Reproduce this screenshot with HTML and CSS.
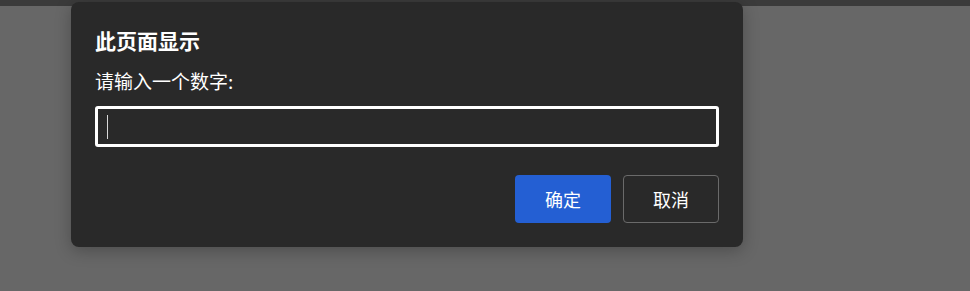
FILE: index.html
```html
<!DOCTYPE html>
<html lang="zh-CN">
<head>
<meta charset="utf-8">
<link rel="stylesheet" href="styles.css">
</head>
<body>
<div class="topbar"></div>
<div class="page"></div>
<div class="dialog">
  <div class="title">此页面显示</div>
  <div class="label">请输入一个数字:</div>
  <div class="input"><span class="caret"></span></div>
  <div class="actions">
    <button class="btn primary">确定</button>
    <button class="btn secondary">取消</button>
  </div>
</div>
</body>
</html>
```
FILE: styles.css
```css
html, body {
  margin: 0;
  padding: 0;
  width: 970px;
  height: 291px;
  overflow: hidden;
  background: #676767;
  font-family: "Noto Sans CJK SC", "Noto Sans", sans-serif;
}
.topbar {
  height: 6px;
  background: #3b3b3b;
}
.dialog {
  position: absolute;
  left: 71px;
  top: 2px;
  width: 672px;
  box-sizing: border-box;
  padding: 24px 24px 24px 24px;
  background: #292929;
  border-radius: 8px;
  box-shadow: 0 4px 16px rgba(0, 0, 0, 0.25);
  color: #ffffff;
  display: flex;
  flex-direction: column;
}
.title {
  font-size: 21px;
  font-weight: 700;
  line-height: 28px;
}
.label {
  margin-top: 14px;
  font-size: 19px;
  line-height: 26px;
}
.input {
  margin-top: 12px;
  height: 41px;
  box-sizing: border-box;
  border: 3px solid #ffffff;
  border-radius: 3px;
  display: flex;
  align-items: center;
  padding-left: 9px;
}
.caret {
  width: 1px;
  height: 24px;
  background: #d8d8d8;
}
.actions {
  margin-top: 28px;
  display: flex;
  justify-content: flex-end;
  gap: 12px;
}
.btn {
  width: 96px;
  height: 48px;
  border-radius: 4px;
  font-family: inherit;
  font-size: 18px;
  color: #ffffff;
  cursor: pointer;
}
.primary {
  background: #245fd3;
  border: none;
}
.secondary {
  background: transparent;
  border: 1.5px solid #6a6a6a;
}
```
